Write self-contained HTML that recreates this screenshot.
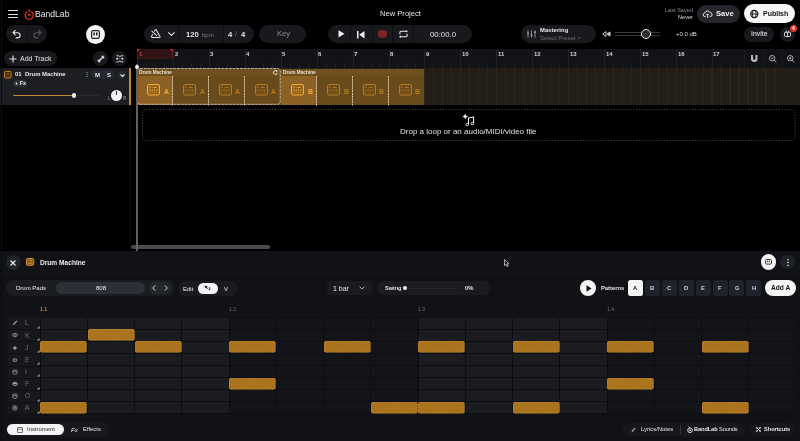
<!DOCTYPE html><html><head><meta charset="utf-8"><style>
*{margin:0;padding:0;box-sizing:border-box}
html,body{width:800px;height:441px;overflow:hidden;background:#000;font-family:"Liberation Sans",sans-serif;color:#e8e8ea}
.a{position:absolute}
.p{position:absolute;background:#1c1d21}
.t{position:absolute;white-space:nowrap;line-height:1;will-change:transform}
svg{position:absolute;overflow:visible}
</style></head><body>
<div class="a" style="left:8px;top:10px;width:10px;height:1.4px;background:#e6e6e6;border-radius:0.7px;"></div>
<div class="a" style="left:8px;top:13.5px;width:10px;height:1.4px;background:#e6e6e6;border-radius:0.7px;"></div>
<div class="a" style="left:8px;top:17px;width:10px;height:1.4px;background:#e6e6e6;border-radius:0.7px;"></div>
<svg style="left:23.5px;top:8.5px" width="10" height="10" viewBox="0 0 10 10"><path d="M3.3 2.6 A4.1 4.1 0 1 0 7.1 2.6" fill="none" stroke="#dc2a22" stroke-width="1.3"/><path d="M5.2 0.4 V2.8" stroke="#dc2a22" stroke-width="1.8"/><circle cx="5.2" cy="5.7" r="1.3" fill="#dc2a22"/></svg>
<div class="t" style="left:34.5px;top:10.3px;font-size:8.6px;color:#e6e6e6;font-weight:normal;">BandLab</div>
<div class="t" style="left:379.6px;top:10.3px;font-size:7.6px;color:#e6e6e6;font-weight:normal;">New Project</div>
<div class="a" style="left:6px;top:25px;width:41px;height:18px;background:#18191d;border-radius:9px;"></div>
<div class="a" style="left:26.5px;top:25px;width:1px;height:18px;background:#0e0e10;border-radius:0px;"></div>
<svg style="left:12px;top:29px" width="10" height="10" viewBox="0 0 10 10"><path d="M3.2 1.5 L1 3.7 L3.2 5.9 M1.2 3.7 H5.5 A2.6 2.6 0 0 1 5.5 8.9 H4.2" fill="none" stroke="#e8e8e8" stroke-width="1.1" stroke-linecap="round" stroke-linejoin="round"/></svg>
<svg style="left:32px;top:29px" width="10" height="10" viewBox="0 0 10 10"><path d="M6.8 1.5 L9 3.7 L6.8 5.9 M8.8 3.7 H4.5 A2.6 2.6 0 0 0 4.5 8.9 H5.8" fill="none" stroke="#555" stroke-width="1.1" stroke-linecap="round" stroke-linejoin="round"/></svg>
<div class="a" style="left:86px;top:24.5px;width:19px;height:19px;background:#f4f4f4;border-radius:9.5px;"></div>
<svg style="left:91.2px;top:29.6px" width="9" height="9" viewBox="0 0 9 9"><rect x="0.6" y="0.6" width="7.8" height="7.8" rx="1.6" fill="none" stroke="#222" stroke-width="1.2"/><rect x="2.4" y="2.4" width="1.5" height="3" fill="#222"/><rect x="5" y="2.4" width="1.5" height="3" fill="#222"/></svg>
<div class="a" style="left:144px;top:25px;width:110px;height:18px;background:#18191d;border-radius:9px;"></div>
<div class="a" style="left:177.5px;top:25px;width:1px;height:18px;background:#0e0e10;border-radius:0px;"></div>
<div class="a" style="left:222.5px;top:25px;width:1px;height:18px;background:#0e0e10;border-radius:0px;"></div>
<svg style="left:150.8px;top:29.3px" width="9.5" height="9" viewBox="0 0 9.5 9"><path d="M3.2 2.6 L4.2 0.9 Q4.75 0.1 5.3 0.9 L9 7.4 Q9.3 8.5 8.2 8.5 H1.3 Q0.2 8.5 0.5 7.4 L1.7 5.2" fill="none" stroke="#e6e6e6" stroke-width="1.05" stroke-linejoin="round"/><path d="M0.8 2.2 L5.8 6.6" stroke="#e6e6e6" stroke-width="1.05" stroke-linecap="round"/></svg>
<svg style="left:168px;top:32.4px" width="7" height="4" viewBox="0 0 7 4"><path d="M0.6 0.6 L3.4 3.3 L6.2 0.6" fill="none" stroke="#e6e6e6" stroke-width="1.1" stroke-linecap="round" stroke-linejoin="round"/></svg>
<div class="t" style="left:186.2px;top:30.6px;font-size:7.6px;color:#e6e6e6;font-weight:bold;">120</div>
<div class="t" style="left:202px;top:31.8px;font-size:6px;color:#808084;font-weight:normal;">bpm</div>
<div class="t" style="left:228.2px;top:30.6px;font-size:7.6px;color:#e6e6e6;font-weight:bold;">4</div>
<div class="t" style="left:235px;top:30.4px;font-size:8px;color:#777;font-weight:normal;">/</div>
<div class="t" style="left:241.4px;top:30.6px;font-size:7.6px;color:#e6e6e6;font-weight:bold;">4</div>
<div class="a" style="left:259px;top:25px;width:47px;height:18px;background:#18191d;border-radius:9px;"></div>
<div class="t" style="left:276.5px;top:30.4px;font-size:7.6px;color:#8a8a8e;font-weight:normal;">Key</div>
<div class="a" style="left:328px;top:25px;width:144px;height:18px;background:#18191d;border-radius:9px;"></div>
<div class="a" style="left:350px;top:25px;width:1px;height:18px;background:#0e0e10;border-radius:0px;"></div>
<div class="a" style="left:372px;top:25px;width:1px;height:18px;background:#0e0e10;border-radius:0px;"></div>
<div class="a" style="left:392.2px;top:25px;width:1px;height:18px;background:#0e0e10;border-radius:0px;"></div>
<div class="a" style="left:413.2px;top:25px;width:1px;height:18px;background:#0e0e10;border-radius:0px;"></div>
<svg style="left:337.6px;top:30.2px" width="7" height="8" viewBox="0 0 7 8"><path d="M0.5 0.3 L6.5 3.8 L0.5 7.5 Z" fill="#eee"/></svg>
<svg style="left:357px;top:30.7px" width="8" height="7.5" viewBox="0 0 8 7.5"><rect x="0" y="0" width="1.5" height="7.5" fill="#eee"/><path d="M7.5 0 L2.2 3.75 L7.5 7.5 Z" fill="#eee"/></svg>
<div class="a" style="left:378.2px;top:29.6px;width:8.8px;height:8.8px;background:#7e2421;border-radius:4.4px;"></div>
<svg style="left:399.3px;top:30.3px" width="9" height="8" viewBox="0 0 9 8"><path d="M0.9 4.2 V2.6 Q0.9 1.3 2.2 1.3 H7.6 M8.1 3.8 V5.4 Q8.1 6.7 6.8 6.7 H1.4" fill="none" stroke="#eee" stroke-width="1.05"/><circle cx="7.7" cy="1.3" r="0.9" fill="#eee"/><circle cx="1.3" cy="6.7" r="0.9" fill="#eee"/></svg>
<div class="t" style="left:430px;top:30.6px;font-size:7.8px;color:#e6e6e6;font-weight:normal;">00:00.0</div>
<div class="a" style="left:520.5px;top:25px;width:75.5px;height:18px;background:#18191d;border-radius:9px;"></div>
<svg style="left:526.6px;top:30px" width="9" height="8" viewBox="0 0 9 8"><g stroke="#9a9a9e" stroke-width="0.9"><path d="M1 0.3V2.2M1 4V7.7M4.5 0.3V4.2M4.5 6V7.7M8 0.3V1.2M8 3V7.7"/></g><g fill="#b0b0b4"><rect x="0" y="2.4" width="2" height="1.4"/><rect x="3.5" y="4.4" width="2" height="1.4"/><rect x="7" y="1.4" width="2" height="1.4"/></g></svg>
<div class="t" style="left:539.5px;top:27.6px;font-size:5.8px;color:#eeeeee;font-weight:bold;letter-spacing:0.1px">Mastering</div>
<div class="t" style="left:539.5px;top:35px;font-size:6px;color:#6e6e72;font-weight:normal;">Select Preset &gt;</div>
<svg style="left:601.5px;top:31px" width="9" height="6" viewBox="0 0 9 6"><path d="M0.6 3 L4 0.6 V5.4 Z" fill="none" stroke="#ddd" stroke-width="0.9" stroke-linejoin="round"/><path d="M5.2 2 L8.5 0.4 V5.6 L5.2 4 Z" fill="#ccc"/></svg>
<div class="a" style="left:615px;top:31.8px;width:45px;height:1.2px;background:#38383c;border-radius:0px;"></div>
<div class="a" style="left:615px;top:35.3px;width:45px;height:1.2px;background:#38383c;border-radius:0px;"></div>
<div class="a" style="left:640.5px;top:29px;width:10px;height:10px;border-radius:50%;background:#2e2e31;border:1.1px solid #e8e8e8"></div>
<div class="t" style="left:675.5px;top:31.2px;font-size:6px;color:#dcdcdc;font-weight:normal;">+0.0 dB</div>
<div class="t" style="left:664.5px;top:7.8px;font-size:5.6px;color:#8a8a8e;font-weight:normal;">Last Saved</div>
<div class="t" style="left:677.5px;top:14.7px;font-size:5.6px;color:#dcdcde;font-weight:normal;">Never</div>
<div class="a" style="left:697px;top:4.5px;width:43px;height:18.5px;background:#24262b;border-radius:9.25px;"></div>
<svg style="left:703.3px;top:9.6px" width="9" height="8" viewBox="0 0 9 8"><path d="M2.6 6.6 H2.1 A1.8 1.8 0 0 1 1.9 3 A2.7 2.7 0 0 1 7 2.6 A1.9 1.9 0 0 1 7.2 6.6 H6.6" fill="none" stroke="#eee" stroke-width="0.95"/><path d="M4.6 7.8 V4 M3.3 5.2 L4.6 3.9 L5.9 5.2" fill="none" stroke="#eee" stroke-width="0.95"/></svg>
<div class="t" style="left:715.8px;top:9.6px;font-size:7.6px;color:#f0f0f0;font-weight:bold;">Save</div>
<div class="a" style="left:744px;top:4px;width:51px;height:19px;background:#f6f6f6;border-radius:9.5px;"></div>
<svg style="left:749.6px;top:9.6px" width="9" height="8" viewBox="0 0 9 8"><circle cx="4.3" cy="4" r="3.6" fill="none" stroke="#111" stroke-width="1.1"/><path d="M0.7 4 H7.9 M3 0.8 Q1.9 4 3 7.2 M5.6 0.8 Q6.7 4 5.6 7.2" stroke="#111" stroke-width="0.9" fill="none"/></svg>
<div class="t" style="left:762.5px;top:10px;font-size:7px;color:#111;font-weight:bold;">Publish</div>
<div class="a" style="left:744px;top:27px;width:30px;height:14.5px;background:#18191d;border-radius:7.25px;"></div>
<div class="t" style="left:750.6px;top:31px;font-size:6.9px;color:#f0f0f0;font-weight:normal;">Invite</div>
<div class="a" style="left:780px;top:27px;width:14.5px;height:14.5px;background:#18191d;border-radius:7.25px;"></div>
<svg style="left:783.8px;top:30.3px" width="7" height="7" viewBox="0 0 7 7"><rect x="0.5" y="2.3" width="6" height="4.2" rx="0.8" fill="none" stroke="#ddd" stroke-width="0.95"/><path d="M2.3 2.3 V0.6 M4.7 2.3 V0.6 M3.5 2.3 V6.5" stroke="#ddd" stroke-width="0.95"/></svg>
<div class="a" style="left:789.7px;top:24.6px;width:7px;height:7px;background:#e3352b;border-radius:3.5px;"></div>
<div class="t" style="left:791.6px;top:25.7px;font-size:5px;color:#fff;font-weight:bold;">4</div>
<div class="a" style="left:4px;top:51px;width:53px;height:15px;background:#18191d;border-radius:7.5px;"></div>
<svg style="left:8.5px;top:54.5px" width="8" height="8" viewBox="0 0 8 8"><path d="M4 0.5 V7.5 M0.5 4 H7.5" stroke="#e6e6e6" stroke-width="1.1"/></svg>
<div class="t" style="left:19.5px;top:55px;font-size:7px;color:#e6e6e6;font-weight:normal;">Add Track</div>
<div class="a" style="left:93px;top:51px;width:15px;height:15px;background:#18191d;border-radius:7.5px;"></div>
<svg style="left:96.5px;top:54.5px" width="8" height="8" viewBox="0 0 8 8"><path d="M2.2 5.8 L5.8 2.2" stroke="#d8d8d8" stroke-width="1.5"/><circle cx="1.6" cy="5.6" r="1.05" fill="#d8d8d8"/><circle cx="2.4" cy="6.4" r="1.05" fill="#d8d8d8"/><circle cx="5.6" cy="1.6" r="1.05" fill="#d8d8d8"/><circle cx="6.4" cy="2.4" r="1.05" fill="#d8d8d8"/></svg>
<div class="a" style="left:112px;top:51px;width:15px;height:15px;background:#18191d;border-radius:7.5px;"></div>
<svg style="left:115.5px;top:54.5px" width="8" height="8" viewBox="0 0 8 8"><path d="M0.4 0.7 L2.6 0.9 L3.9 1.5 L5.2 0.9 L7.4 0.7 M0.4 6.9 L2.6 6.7 L3.9 6.1 L5.2 6.7 L7.4 6.9" fill="none" stroke="#d0d0d0" stroke-width="1"/><circle cx="1.3" cy="3.8" r="1" fill="#f0f0f0"/><circle cx="6.4" cy="3.8" r="1" fill="#f0f0f0"/><circle cx="3.85" cy="3.8" r="0.5" fill="#bbb"/></svg>
<div class="a" style="left:0px;top:68px;width:129px;height:37px;background:#1d1e22;border-radius:0px;"></div>
<div class="a" style="left:129px;top:68px;width:2px;height:37px;background:#c38b2f;border-radius:0px;"></div>
<svg style="left:3.6px;top:70.6px" width="7.5" height="7.5" viewBox="0 0 7.5 7.5"><rect x="0.45" y="0.45" width="6.6" height="6.6" rx="0.9" fill="#33240f" stroke="#dc8f2c" stroke-width="0.9"/><path d="M1.8 2.4 H5.7 M1.8 3.8 H5.7 M1.8 5.2 H5.7" stroke="#dc8f2c" stroke-width="0.6" stroke-dasharray="0.7 0.5"/></svg>
<div class="t" style="left:14.8px;top:72.2px;font-size:5.9px;color:#ececec;font-weight:bold;">01</div>
<div class="t" style="left:24.8px;top:72.2px;font-size:5.9px;color:#ececec;font-weight:bold;">Drum Machine</div>
<svg style="left:85.5px;top:72.2px" width="2" height="5" viewBox="0 0 2 5"><circle cx="1" cy="0.5" r="0.5" fill="#ccc"/><circle cx="1" cy="2.5" r="0.5" fill="#ccc"/><circle cx="1" cy="4.5" r="0.5" fill="#ccc"/></svg>
<div class="a" style="left:91.3px;top:69.6px;width:23.7px;height:9.6px;background:#252830;border-radius:4.8px;"></div>
<div class="t" style="left:95.4px;top:71.6px;font-size:6px;color:#e6e6e6;font-weight:bold;">M</div>
<div class="t" style="left:107.4px;top:71.6px;font-size:6px;color:#e6e6e6;font-weight:bold;">S</div>
<div class="a" style="left:117.8px;top:70.8px;width:8.6px;height:8.2px;background:#262930;border-radius:4.1px;"></div>
<svg style="left:119.6px;top:73.6px" width="5" height="3" viewBox="0 0 5 3"><path d="M0.5 0.5 L2.5 2.4 L4.5 0.5" fill="none" stroke="#e8e8e8" stroke-width="1.1"/></svg>
<div class="a" style="left:13.2px;top:80.3px;width:13.4px;height:6.8px;background:#2d3037;border-radius:3.4px;"></div>
<div class="t" style="left:15px;top:81.2px;font-size:5.4px;color:#ececec;font-weight:bold;">+ Fx</div>
<div class="a" style="left:13px;top:95px;width:60.5px;height:1.4px;background:#c38b2f;border-radius:0.7px;"></div>
<div class="a" style="left:73.5px;top:95.3px;width:25.5px;height:0.7px;background:#2c2d32;border-radius:0px;"></div>
<div class="a" style="left:71.5px;top:93.3px;width:4.5px;height:4.5px;background:#f2f2f2;border-radius:2.25px;"></div>
<div class="a" style="left:110.8px;top:90.3px;width:11px;height:11px;background:#f4f4f4;border-radius:5.5px;"></div>
<div class="a" style="left:115.7px;top:91.2px;width:1.1px;height:3.6px;background:#333;border-radius:0px;"></div>
<div class="t" style="left:107.6px;top:97.2px;font-size:4.5px;color:#999;font-weight:normal;">L</div>
<div class="t" style="left:122.6px;top:97.2px;font-size:4.5px;color:#999;font-weight:normal;">R</div>
<div class="a" style="left:137px;top:49px;width:607px;height:18.5px;background:#121316;border-radius:0px;"></div>
<div class="a" style="left:137.0px;top:49px;width:0.8px;height:18.5px;background:#222225;border-radius:0px;"></div>
<div class="t" style="left:138.6px;top:51.3px;font-size:6px;color:#d2d2d4;font-weight:bold;">1</div>
<div class="a" style="left:145.98px;top:63px;width:0.7px;height:4.5px;background:#222225;border-radius:0px;"></div>
<div class="a" style="left:154.97px;top:63px;width:0.7px;height:4.5px;background:#222225;border-radius:0px;"></div>
<div class="a" style="left:163.95px;top:63px;width:0.7px;height:4.5px;background:#222225;border-radius:0px;"></div>
<div class="a" style="left:172.93px;top:49px;width:0.8px;height:18.5px;background:#222225;border-radius:0px;"></div>
<div class="t" style="left:174.53px;top:51.3px;font-size:6px;color:#d2d2d4;font-weight:bold;">2</div>
<div class="a" style="left:181.91px;top:63px;width:0.7px;height:4.5px;background:#222225;border-radius:0px;"></div>
<div class="a" style="left:190.9px;top:63px;width:0.7px;height:4.5px;background:#222225;border-radius:0px;"></div>
<div class="a" style="left:199.88px;top:63px;width:0.7px;height:4.5px;background:#222225;border-radius:0px;"></div>
<div class="a" style="left:208.86px;top:49px;width:0.8px;height:18.5px;background:#222225;border-radius:0px;"></div>
<div class="t" style="left:210.46px;top:51.3px;font-size:6px;color:#d2d2d4;font-weight:bold;">3</div>
<div class="a" style="left:217.84px;top:63px;width:0.7px;height:4.5px;background:#222225;border-radius:0px;"></div>
<div class="a" style="left:226.83px;top:63px;width:0.7px;height:4.5px;background:#222225;border-radius:0px;"></div>
<div class="a" style="left:235.81px;top:63px;width:0.7px;height:4.5px;background:#222225;border-radius:0px;"></div>
<div class="a" style="left:244.79px;top:49px;width:0.8px;height:18.5px;background:#222225;border-radius:0px;"></div>
<div class="t" style="left:246.39px;top:51.3px;font-size:6px;color:#d2d2d4;font-weight:bold;">4</div>
<div class="a" style="left:253.77px;top:63px;width:0.7px;height:4.5px;background:#222225;border-radius:0px;"></div>
<div class="a" style="left:262.75px;top:63px;width:0.7px;height:4.5px;background:#222225;border-radius:0px;"></div>
<div class="a" style="left:271.74px;top:63px;width:0.7px;height:4.5px;background:#222225;border-radius:0px;"></div>
<div class="a" style="left:280.72px;top:49px;width:0.8px;height:18.5px;background:#222225;border-radius:0px;"></div>
<div class="t" style="left:282.32000000000005px;top:51.3px;font-size:6px;color:#d2d2d4;font-weight:bold;">5</div>
<div class="a" style="left:289.7px;top:63px;width:0.7px;height:4.5px;background:#222225;border-radius:0px;"></div>
<div class="a" style="left:298.69px;top:63px;width:0.7px;height:4.5px;background:#222225;border-radius:0px;"></div>
<div class="a" style="left:307.67px;top:63px;width:0.7px;height:4.5px;background:#222225;border-radius:0px;"></div>
<div class="a" style="left:316.65px;top:49px;width:0.8px;height:18.5px;background:#222225;border-radius:0px;"></div>
<div class="t" style="left:318.25px;top:51.3px;font-size:6px;color:#d2d2d4;font-weight:bold;">6</div>
<div class="a" style="left:325.63px;top:63px;width:0.7px;height:4.5px;background:#222225;border-radius:0px;"></div>
<div class="a" style="left:334.61px;top:63px;width:0.7px;height:4.5px;background:#222225;border-radius:0px;"></div>
<div class="a" style="left:343.6px;top:63px;width:0.7px;height:4.5px;background:#222225;border-radius:0px;"></div>
<div class="a" style="left:352.58px;top:49px;width:0.8px;height:18.5px;background:#222225;border-radius:0px;"></div>
<div class="t" style="left:354.18px;top:51.3px;font-size:6px;color:#d2d2d4;font-weight:bold;">7</div>
<div class="a" style="left:361.56px;top:63px;width:0.7px;height:4.5px;background:#222225;border-radius:0px;"></div>
<div class="a" style="left:370.54px;top:63px;width:0.7px;height:4.5px;background:#222225;border-radius:0px;"></div>
<div class="a" style="left:379.53px;top:63px;width:0.7px;height:4.5px;background:#222225;border-radius:0px;"></div>
<div class="a" style="left:388.51px;top:49px;width:0.8px;height:18.5px;background:#222225;border-radius:0px;"></div>
<div class="t" style="left:390.11px;top:51.3px;font-size:6px;color:#d2d2d4;font-weight:bold;">8</div>
<div class="a" style="left:397.49px;top:63px;width:0.7px;height:4.5px;background:#222225;border-radius:0px;"></div>
<div class="a" style="left:406.47px;top:63px;width:0.7px;height:4.5px;background:#222225;border-radius:0px;"></div>
<div class="a" style="left:415.46px;top:63px;width:0.7px;height:4.5px;background:#222225;border-radius:0px;"></div>
<div class="a" style="left:424.44px;top:49px;width:0.8px;height:18.5px;background:#222225;border-radius:0px;"></div>
<div class="t" style="left:426.04px;top:51.3px;font-size:6px;color:#d2d2d4;font-weight:bold;">9</div>
<div class="a" style="left:433.42px;top:63px;width:0.7px;height:4.5px;background:#222225;border-radius:0px;"></div>
<div class="a" style="left:442.4px;top:63px;width:0.7px;height:4.5px;background:#222225;border-radius:0px;"></div>
<div class="a" style="left:451.39px;top:63px;width:0.7px;height:4.5px;background:#222225;border-radius:0px;"></div>
<div class="a" style="left:460.37px;top:49px;width:0.8px;height:18.5px;background:#222225;border-radius:0px;"></div>
<div class="t" style="left:461.97px;top:51.3px;font-size:6px;color:#d2d2d4;font-weight:bold;">10</div>
<div class="a" style="left:469.35px;top:63px;width:0.7px;height:4.5px;background:#222225;border-radius:0px;"></div>
<div class="a" style="left:478.33px;top:63px;width:0.7px;height:4.5px;background:#222225;border-radius:0px;"></div>
<div class="a" style="left:487.32px;top:63px;width:0.7px;height:4.5px;background:#222225;border-radius:0px;"></div>
<div class="a" style="left:496.3px;top:49px;width:0.8px;height:18.5px;background:#222225;border-radius:0px;"></div>
<div class="t" style="left:497.90000000000003px;top:51.3px;font-size:6px;color:#d2d2d4;font-weight:bold;">11</div>
<div class="a" style="left:505.28px;top:63px;width:0.7px;height:4.5px;background:#222225;border-radius:0px;"></div>
<div class="a" style="left:514.26px;top:63px;width:0.7px;height:4.5px;background:#222225;border-radius:0px;"></div>
<div class="a" style="left:523.25px;top:63px;width:0.7px;height:4.5px;background:#222225;border-radius:0px;"></div>
<div class="a" style="left:532.23px;top:49px;width:0.8px;height:18.5px;background:#222225;border-radius:0px;"></div>
<div class="t" style="left:533.83px;top:51.3px;font-size:6px;color:#d2d2d4;font-weight:bold;">12</div>
<div class="a" style="left:541.21px;top:63px;width:0.7px;height:4.5px;background:#222225;border-radius:0px;"></div>
<div class="a" style="left:550.2px;top:63px;width:0.7px;height:4.5px;background:#222225;border-radius:0px;"></div>
<div class="a" style="left:559.18px;top:63px;width:0.7px;height:4.5px;background:#222225;border-radius:0px;"></div>
<div class="a" style="left:568.16px;top:49px;width:0.8px;height:18.5px;background:#222225;border-radius:0px;"></div>
<div class="t" style="left:569.76px;top:51.3px;font-size:6px;color:#d2d2d4;font-weight:bold;">13</div>
<div class="a" style="left:577.14px;top:63px;width:0.7px;height:4.5px;background:#222225;border-radius:0px;"></div>
<div class="a" style="left:586.12px;top:63px;width:0.7px;height:4.5px;background:#222225;border-radius:0px;"></div>
<div class="a" style="left:595.11px;top:63px;width:0.7px;height:4.5px;background:#222225;border-radius:0px;"></div>
<div class="a" style="left:604.09px;top:49px;width:0.8px;height:18.5px;background:#222225;border-radius:0px;"></div>
<div class="t" style="left:605.69px;top:51.3px;font-size:6px;color:#d2d2d4;font-weight:bold;">14</div>
<div class="a" style="left:613.07px;top:63px;width:0.7px;height:4.5px;background:#222225;border-radius:0px;"></div>
<div class="a" style="left:622.06px;top:63px;width:0.7px;height:4.5px;background:#222225;border-radius:0px;"></div>
<div class="a" style="left:631.04px;top:63px;width:0.7px;height:4.5px;background:#222225;border-radius:0px;"></div>
<div class="a" style="left:640.02px;top:49px;width:0.8px;height:18.5px;background:#222225;border-radius:0px;"></div>
<div class="t" style="left:641.62px;top:51.3px;font-size:6px;color:#d2d2d4;font-weight:bold;">15</div>
<div class="a" style="left:649.0px;top:63px;width:0.7px;height:4.5px;background:#222225;border-radius:0px;"></div>
<div class="a" style="left:657.99px;top:63px;width:0.7px;height:4.5px;background:#222225;border-radius:0px;"></div>
<div class="a" style="left:666.97px;top:63px;width:0.7px;height:4.5px;background:#222225;border-radius:0px;"></div>
<div class="a" style="left:675.95px;top:49px;width:0.8px;height:18.5px;background:#222225;border-radius:0px;"></div>
<div class="t" style="left:677.5500000000001px;top:51.3px;font-size:6px;color:#d2d2d4;font-weight:bold;">16</div>
<div class="a" style="left:684.93px;top:63px;width:0.7px;height:4.5px;background:#222225;border-radius:0px;"></div>
<div class="a" style="left:693.92px;top:63px;width:0.7px;height:4.5px;background:#222225;border-radius:0px;"></div>
<div class="a" style="left:702.9px;top:63px;width:0.7px;height:4.5px;background:#222225;border-radius:0px;"></div>
<div class="a" style="left:711.88px;top:49px;width:0.8px;height:18.5px;background:#222225;border-radius:0px;"></div>
<div class="t" style="left:713.48px;top:51.3px;font-size:6px;color:#d2d2d4;font-weight:bold;">17</div>
<div class="a" style="left:720.86px;top:63px;width:0.7px;height:4.5px;background:#222225;border-radius:0px;"></div>
<div class="a" style="left:729.85px;top:63px;width:0.7px;height:4.5px;background:#222225;border-radius:0px;"></div>
<div class="a" style="left:738.83px;top:63px;width:0.7px;height:4.5px;background:#222225;border-radius:0px;"></div>
<div class="a" style="left:137px;top:49px;width:36px;height:9.5px;background:#301413;border-radius:0px;border-left:0.8px dotted #6a2622;border-right:0.8px dotted #6a2622;border-bottom:0.8px dotted #4a1c1a"></div>
<svg style="left:137px;top:49px" width="4" height="4" viewBox="0 0 4 4"><path d="M0 0 H3.2 L0 3.2 Z" fill="#a82d28"/></svg>
<svg style="left:169px;top:49px" width="4" height="4" viewBox="0 0 4 4"><path d="M4 0 H0.8 L4 3.2 Z" fill="#a82d28"/></svg>
<div class="t" style="left:138.6px;top:51.3px;font-size:6px;color:#c0443c;font-weight:bold;">1</div>
<div class="a" style="left:744px;top:49px;width:56px;height:18.5px;background:#121316;border-radius:0px;"></div>
<div class="a" style="left:744px;top:49px;width:0.8px;height:18.5px;background:#1c1c1f;border-radius:0px;"></div>
<div class="a" style="left:763px;top:49px;width:0.8px;height:18.5px;background:#1c1c1f;border-radius:0px;"></div>
<div class="a" style="left:781.7px;top:49px;width:0.8px;height:18.5px;background:#1c1c1f;border-radius:0px;"></div>
<svg style="left:750.5px;top:55px" width="6.5" height="7" viewBox="0 0 6.5 7"><path d="M0 0 H2 V3.5 A1.25 1.25 0 0 0 4.5 3.5 V0 H6.5 V3.7 A3.25 3.25 0 0 1 0 3.7 Z" fill="#bbb"/></svg>
<svg style="left:768.5px;top:55px" width="8" height="8" viewBox="0 0 8 8"><circle cx="3.2" cy="3.2" r="2.7" fill="none" stroke="#bbb" stroke-width="0.9"/><path d="M2 3.2 H4.4 M5.2 5.2 L7.3 7.3" stroke="#bbb" stroke-width="0.9"/></svg>
<svg style="left:787px;top:55px" width="8" height="8" viewBox="0 0 8 8"><circle cx="3.2" cy="3.2" r="2.7" fill="none" stroke="#bbb" stroke-width="0.9"/><path d="M2 3.2 H4.4 M3.2 2 V4.4 M5.2 5.2 L7.3 7.3" stroke="#bbb" stroke-width="0.9"/></svg>
<div class="a" style="left:137px;top:68px;width:663px;height:37px;background:#231e17;border-radius:0px;"></div>
<div class="a" style="left:136.6px;top:68px;width:1.4px;height:37px;background:#2c261d;border-radius:0px;"></div>
<div class="a" style="left:145.57999999999998px;top:68px;width:1.4px;height:37px;background:#29241c;border-radius:0px;"></div>
<div class="a" style="left:154.57px;top:68px;width:1.4px;height:37px;background:#29241c;border-radius:0px;"></div>
<div class="a" style="left:163.54999999999998px;top:68px;width:1.4px;height:37px;background:#29241c;border-radius:0px;"></div>
<div class="a" style="left:172.53px;top:68px;width:1.4px;height:37px;background:#2c261d;border-radius:0px;"></div>
<div class="a" style="left:181.51px;top:68px;width:1.4px;height:37px;background:#29241c;border-radius:0px;"></div>
<div class="a" style="left:190.48999999999998px;top:68px;width:1.4px;height:37px;background:#29241c;border-radius:0px;"></div>
<div class="a" style="left:199.48px;top:68px;width:1.4px;height:37px;background:#29241c;border-radius:0px;"></div>
<div class="a" style="left:208.46px;top:68px;width:1.4px;height:37px;background:#2c261d;border-radius:0px;"></div>
<div class="a" style="left:217.44px;top:68px;width:1.4px;height:37px;background:#29241c;border-radius:0px;"></div>
<div class="a" style="left:226.42px;top:68px;width:1.4px;height:37px;background:#29241c;border-radius:0px;"></div>
<div class="a" style="left:235.41px;top:68px;width:1.4px;height:37px;background:#29241c;border-radius:0px;"></div>
<div class="a" style="left:244.39px;top:68px;width:1.4px;height:37px;background:#2c261d;border-radius:0px;"></div>
<div class="a" style="left:253.37px;top:68px;width:1.4px;height:37px;background:#29241c;border-radius:0px;"></div>
<div class="a" style="left:262.35px;top:68px;width:1.4px;height:37px;background:#29241c;border-radius:0px;"></div>
<div class="a" style="left:271.34000000000003px;top:68px;width:1.4px;height:37px;background:#29241c;border-radius:0px;"></div>
<div class="a" style="left:280.32000000000005px;top:68px;width:1.4px;height:37px;background:#2c261d;border-radius:0px;"></div>
<div class="a" style="left:289.3px;top:68px;width:1.4px;height:37px;background:#29241c;border-radius:0px;"></div>
<div class="a" style="left:298.29px;top:68px;width:1.4px;height:37px;background:#29241c;border-radius:0px;"></div>
<div class="a" style="left:307.27000000000004px;top:68px;width:1.4px;height:37px;background:#29241c;border-radius:0px;"></div>
<div class="a" style="left:316.25px;top:68px;width:1.4px;height:37px;background:#2c261d;border-radius:0px;"></div>
<div class="a" style="left:325.23px;top:68px;width:1.4px;height:37px;background:#29241c;border-radius:0px;"></div>
<div class="a" style="left:334.22px;top:68px;width:1.4px;height:37px;background:#29241c;border-radius:0px;"></div>
<div class="a" style="left:343.20000000000005px;top:68px;width:1.4px;height:37px;background:#29241c;border-radius:0px;"></div>
<div class="a" style="left:352.18px;top:68px;width:1.4px;height:37px;background:#2c261d;border-radius:0px;"></div>
<div class="a" style="left:361.16px;top:68px;width:1.4px;height:37px;background:#29241c;border-radius:0px;"></div>
<div class="a" style="left:370.14000000000004px;top:68px;width:1.4px;height:37px;background:#29241c;border-radius:0px;"></div>
<div class="a" style="left:379.13px;top:68px;width:1.4px;height:37px;background:#29241c;border-radius:0px;"></div>
<div class="a" style="left:388.11px;top:68px;width:1.4px;height:37px;background:#2c261d;border-radius:0px;"></div>
<div class="a" style="left:397.09000000000003px;top:68px;width:1.4px;height:37px;background:#29241c;border-radius:0px;"></div>
<div class="a" style="left:406.08000000000004px;top:68px;width:1.4px;height:37px;background:#29241c;border-radius:0px;"></div>
<div class="a" style="left:415.06px;top:68px;width:1.4px;height:37px;background:#29241c;border-radius:0px;"></div>
<div class="a" style="left:424.04px;top:68px;width:1.4px;height:37px;background:#2c261d;border-radius:0px;"></div>
<div class="a" style="left:433.02000000000004px;top:68px;width:1.4px;height:37px;background:#29241c;border-radius:0px;"></div>
<div class="a" style="left:442.0px;top:68px;width:1.4px;height:37px;background:#29241c;border-radius:0px;"></div>
<div class="a" style="left:450.99px;top:68px;width:1.4px;height:37px;background:#29241c;border-radius:0px;"></div>
<div class="a" style="left:459.97px;top:68px;width:1.4px;height:37px;background:#2c261d;border-radius:0px;"></div>
<div class="a" style="left:468.95000000000005px;top:68px;width:1.4px;height:37px;background:#29241c;border-radius:0px;"></div>
<div class="a" style="left:477.93px;top:68px;width:1.4px;height:37px;background:#29241c;border-radius:0px;"></div>
<div class="a" style="left:486.92px;top:68px;width:1.4px;height:37px;background:#29241c;border-radius:0px;"></div>
<div class="a" style="left:495.90000000000003px;top:68px;width:1.4px;height:37px;background:#2c261d;border-radius:0px;"></div>
<div class="a" style="left:504.88px;top:68px;width:1.4px;height:37px;background:#29241c;border-radius:0px;"></div>
<div class="a" style="left:513.86px;top:68px;width:1.4px;height:37px;background:#29241c;border-radius:0px;"></div>
<div class="a" style="left:522.85px;top:68px;width:1.4px;height:37px;background:#29241c;border-radius:0px;"></div>
<div class="a" style="left:531.83px;top:68px;width:1.4px;height:37px;background:#2c261d;border-radius:0px;"></div>
<div class="a" style="left:540.8100000000001px;top:68px;width:1.4px;height:37px;background:#29241c;border-radius:0px;"></div>
<div class="a" style="left:549.7900000000001px;top:68px;width:1.4px;height:37px;background:#29241c;border-radius:0px;"></div>
<div class="a" style="left:558.78px;top:68px;width:1.4px;height:37px;background:#29241c;border-radius:0px;"></div>
<div class="a" style="left:567.76px;top:68px;width:1.4px;height:37px;background:#2c261d;border-radius:0px;"></div>
<div class="a" style="left:576.74px;top:68px;width:1.4px;height:37px;background:#29241c;border-radius:0px;"></div>
<div class="a" style="left:585.72px;top:68px;width:1.4px;height:37px;background:#29241c;border-radius:0px;"></div>
<div class="a" style="left:594.71px;top:68px;width:1.4px;height:37px;background:#29241c;border-radius:0px;"></div>
<div class="a" style="left:603.69px;top:68px;width:1.4px;height:37px;background:#2c261d;border-radius:0px;"></div>
<div class="a" style="left:612.6700000000001px;top:68px;width:1.4px;height:37px;background:#29241c;border-radius:0px;"></div>
<div class="a" style="left:621.66px;top:68px;width:1.4px;height:37px;background:#29241c;border-radius:0px;"></div>
<div class="a" style="left:630.64px;top:68px;width:1.4px;height:37px;background:#29241c;border-radius:0px;"></div>
<div class="a" style="left:639.62px;top:68px;width:1.4px;height:37px;background:#2c261d;border-radius:0px;"></div>
<div class="a" style="left:648.6px;top:68px;width:1.4px;height:37px;background:#29241c;border-radius:0px;"></div>
<div class="a" style="left:657.59px;top:68px;width:1.4px;height:37px;background:#29241c;border-radius:0px;"></div>
<div class="a" style="left:666.57px;top:68px;width:1.4px;height:37px;background:#29241c;border-radius:0px;"></div>
<div class="a" style="left:675.5500000000001px;top:68px;width:1.4px;height:37px;background:#2c261d;border-radius:0px;"></div>
<div class="a" style="left:684.53px;top:68px;width:1.4px;height:37px;background:#29241c;border-radius:0px;"></div>
<div class="a" style="left:693.51px;top:68px;width:1.4px;height:37px;background:#29241c;border-radius:0px;"></div>
<div class="a" style="left:702.5px;top:68px;width:1.4px;height:37px;background:#29241c;border-radius:0px;"></div>
<div class="a" style="left:711.48px;top:68px;width:1.4px;height:37px;background:#2c261d;border-radius:0px;"></div>
<div class="a" style="left:720.46px;top:68px;width:1.4px;height:37px;background:#29241c;border-radius:0px;"></div>
<div class="a" style="left:729.45px;top:68px;width:1.4px;height:37px;background:#29241c;border-radius:0px;"></div>
<div class="a" style="left:738.4300000000001px;top:68px;width:1.4px;height:37px;background:#29241c;border-radius:0px;"></div>
<div class="a" style="left:747.41px;top:68px;width:1.4px;height:37px;background:#2c261d;border-radius:0px;"></div>
<div class="a" style="left:756.39px;top:68px;width:1.4px;height:37px;background:#29241c;border-radius:0px;"></div>
<div class="a" style="left:765.37px;top:68px;width:1.4px;height:37px;background:#29241c;border-radius:0px;"></div>
<div class="a" style="left:774.36px;top:68px;width:1.4px;height:37px;background:#29241c;border-radius:0px;"></div>
<div class="a" style="left:137px;top:68.5px;width:143.72px;height:36.5px;background:#684a1b;border-radius:0px;"></div>
<div class="a" style="left:137px;top:68.5px;width:143.72px;height:7px;background:#6e4f1d;border-radius:0px;"></div>
<div class="a" style="left:137px;top:75.5px;width:35.93px;height:29.5px;background:#8d6123;border-radius:0px;"></div>
<svg style="left:147.3px;top:83.8px" width="13" height="11.5" viewBox="0 0 13 11.5"><rect x="0.55" y="0.55" width="11.9" height="10.4" rx="1.6" fill="none" stroke="#f6a933" stroke-width="1.1"/><circle cx="3.2" cy="3.3" r="0.75" fill="#f6a933"/><path d="M5.8 3.4 H9.8" stroke="#f6a933" stroke-width="0.9"/><path d="M3 5.4 V7.3 M5.25 5.4 V7.3 M7.5 5.4 V7.3 M9.75 5.4 V7.3" stroke="#f6a933" stroke-width="0.8"/><path d="M2.6 8.7 H10.4" stroke="#f6a933" stroke-width="0.8" stroke-dasharray="0.8 1.45"/></svg>
<div class="t" style="left:163.6px;top:89.3px;font-size:6.9px;color:#f6a933;font-weight:bold;">A</div>
<svg style="left:172.33px;top:75.5px" width="1" height="29.5" viewBox="0 0 1 29.5"><path d="M0.5 0 V29.5" stroke="#cfc1a2" stroke-width="1" stroke-dasharray="2.2 0.6"/></svg>
<svg style="left:183.23000000000002px;top:83.8px" width="13" height="11.5" viewBox="0 0 13 11.5"><rect x="0.55" y="0.55" width="11.9" height="10.4" rx="1.6" fill="none" stroke="#b57b22" stroke-width="1.1"/><circle cx="3.2" cy="3.3" r="0.75" fill="#b57b22"/><path d="M5.8 3.4 H9.8" stroke="#b57b22" stroke-width="0.9"/><path d="M3 5.4 V7.3 M5.25 5.4 V7.3 M7.5 5.4 V7.3 M9.75 5.4 V7.3" stroke="#b57b22" stroke-width="0.8"/><path d="M2.6 8.7 H10.4" stroke="#b57b22" stroke-width="0.8" stroke-dasharray="0.8 1.45"/></svg>
<div class="t" style="left:199.53px;top:89.3px;font-size:6.9px;color:#b57b22;font-weight:bold;">A</div>
<svg style="left:208.26000000000002px;top:75.5px" width="1" height="29.5" viewBox="0 0 1 29.5"><path d="M0.5 0 V29.5" stroke="#cfc1a2" stroke-width="1" stroke-dasharray="2.2 0.6"/></svg>
<svg style="left:219.16000000000003px;top:83.8px" width="13" height="11.5" viewBox="0 0 13 11.5"><rect x="0.55" y="0.55" width="11.9" height="10.4" rx="1.6" fill="none" stroke="#b57b22" stroke-width="1.1"/><circle cx="3.2" cy="3.3" r="0.75" fill="#b57b22"/><path d="M5.8 3.4 H9.8" stroke="#b57b22" stroke-width="0.9"/><path d="M3 5.4 V7.3 M5.25 5.4 V7.3 M7.5 5.4 V7.3 M9.75 5.4 V7.3" stroke="#b57b22" stroke-width="0.8"/><path d="M2.6 8.7 H10.4" stroke="#b57b22" stroke-width="0.8" stroke-dasharray="0.8 1.45"/></svg>
<div class="t" style="left:235.46px;top:89.3px;font-size:6.9px;color:#b57b22;font-weight:bold;">A</div>
<svg style="left:244.19px;top:75.5px" width="1" height="29.5" viewBox="0 0 1 29.5"><path d="M0.5 0 V29.5" stroke="#cfc1a2" stroke-width="1" stroke-dasharray="2.2 0.6"/></svg>
<svg style="left:255.09px;top:83.8px" width="13" height="11.5" viewBox="0 0 13 11.5"><rect x="0.55" y="0.55" width="11.9" height="10.4" rx="1.6" fill="none" stroke="#b57b22" stroke-width="1.1"/><circle cx="3.2" cy="3.3" r="0.75" fill="#b57b22"/><path d="M5.8 3.4 H9.8" stroke="#b57b22" stroke-width="0.9"/><path d="M3 5.4 V7.3 M5.25 5.4 V7.3 M7.5 5.4 V7.3 M9.75 5.4 V7.3" stroke="#b57b22" stroke-width="0.8"/><path d="M2.6 8.7 H10.4" stroke="#b57b22" stroke-width="0.8" stroke-dasharray="0.8 1.45"/></svg>
<div class="t" style="left:271.39px;top:89.3px;font-size:6.9px;color:#b57b22;font-weight:bold;">A</div>
<div class="t" style="left:139.2px;top:71.2px;font-size:4.75px;color:#e9dfcc;font-weight:bold;">Drum Machine</div>
<svg style="left:137px;top:68.4px" width="143.72" height="36.8" viewBox="0 0 143.72 36.8"><rect x="0.5" y="0.5" width="142.72" height="35.8" rx="2.5" fill="none" stroke="#c9bfad" stroke-width="0.9" stroke-dasharray="3 0.7"/></svg>
<svg style="left:272.72px;top:70.3px" width="5" height="5" viewBox="0 0 5 5"><path d="M4 1.2 A2 2 0 1 0 4.4 3" fill="none" stroke="#eee" stroke-width="0.9"/><path d="M3.2 0 L4.3 1.3 L2.9 2" fill="none" stroke="#eee" stroke-width="0.8"/></svg>
<div class="a" style="left:281.02px;top:68.5px;width:143.42px;height:36.5px;background:#684a1b;border-radius:0px;"></div>
<div class="a" style="left:281.02px;top:68.5px;width:143.42px;height:7px;background:#6e4f1d;border-radius:0px;"></div>
<div class="a" style="left:281.02px;top:75.5px;width:35.93px;height:29.5px;background:#8d6123;border-radius:0px;"></div>
<svg style="left:291.32px;top:83.8px" width="13" height="11.5" viewBox="0 0 13 11.5"><rect x="0.55" y="0.55" width="11.9" height="10.4" rx="1.6" fill="none" stroke="#f6a933" stroke-width="1.1"/><circle cx="3.2" cy="3.3" r="0.75" fill="#f6a933"/><path d="M5.8 3.4 H9.8" stroke="#f6a933" stroke-width="0.9"/><path d="M3 5.4 V7.3 M5.25 5.4 V7.3 M7.5 5.4 V7.3 M9.75 5.4 V7.3" stroke="#f6a933" stroke-width="0.8"/><path d="M2.6 8.7 H10.4" stroke="#f6a933" stroke-width="0.8" stroke-dasharray="0.8 1.45"/></svg>
<div class="t" style="left:307.62px;top:89.3px;font-size:6.9px;color:#f6a933;font-weight:bold;">B</div>
<svg style="left:316.34999999999997px;top:75.5px" width="1" height="29.5" viewBox="0 0 1 29.5"><path d="M0.5 0 V29.5" stroke="#cfc1a2" stroke-width="1" stroke-dasharray="2.2 0.6"/></svg>
<svg style="left:327.25px;top:83.8px" width="13" height="11.5" viewBox="0 0 13 11.5"><rect x="0.55" y="0.55" width="11.9" height="10.4" rx="1.6" fill="none" stroke="#b57b22" stroke-width="1.1"/><circle cx="3.2" cy="3.3" r="0.75" fill="#b57b22"/><path d="M5.8 3.4 H9.8" stroke="#b57b22" stroke-width="0.9"/><path d="M3 5.4 V7.3 M5.25 5.4 V7.3 M7.5 5.4 V7.3 M9.75 5.4 V7.3" stroke="#b57b22" stroke-width="0.8"/><path d="M2.6 8.7 H10.4" stroke="#b57b22" stroke-width="0.8" stroke-dasharray="0.8 1.45"/></svg>
<div class="t" style="left:343.55px;top:89.3px;font-size:6.9px;color:#b57b22;font-weight:bold;">B</div>
<svg style="left:352.28px;top:75.5px" width="1" height="29.5" viewBox="0 0 1 29.5"><path d="M0.5 0 V29.5" stroke="#cfc1a2" stroke-width="1" stroke-dasharray="2.2 0.6"/></svg>
<svg style="left:363.18px;top:83.8px" width="13" height="11.5" viewBox="0 0 13 11.5"><rect x="0.55" y="0.55" width="11.9" height="10.4" rx="1.6" fill="none" stroke="#b57b22" stroke-width="1.1"/><circle cx="3.2" cy="3.3" r="0.75" fill="#b57b22"/><path d="M5.8 3.4 H9.8" stroke="#b57b22" stroke-width="0.9"/><path d="M3 5.4 V7.3 M5.25 5.4 V7.3 M7.5 5.4 V7.3 M9.75 5.4 V7.3" stroke="#b57b22" stroke-width="0.8"/><path d="M2.6 8.7 H10.4" stroke="#b57b22" stroke-width="0.8" stroke-dasharray="0.8 1.45"/></svg>
<div class="t" style="left:379.48px;top:89.3px;font-size:6.9px;color:#b57b22;font-weight:bold;">B</div>
<svg style="left:388.21px;top:75.5px" width="1" height="29.5" viewBox="0 0 1 29.5"><path d="M0.5 0 V29.5" stroke="#cfc1a2" stroke-width="1" stroke-dasharray="2.2 0.6"/></svg>
<svg style="left:399.11px;top:83.8px" width="13" height="11.5" viewBox="0 0 13 11.5"><rect x="0.55" y="0.55" width="11.9" height="10.4" rx="1.6" fill="none" stroke="#b57b22" stroke-width="1.1"/><circle cx="3.2" cy="3.3" r="0.75" fill="#b57b22"/><path d="M5.8 3.4 H9.8" stroke="#b57b22" stroke-width="0.9"/><path d="M3 5.4 V7.3 M5.25 5.4 V7.3 M7.5 5.4 V7.3 M9.75 5.4 V7.3" stroke="#b57b22" stroke-width="0.8"/><path d="M2.6 8.7 H10.4" stroke="#b57b22" stroke-width="0.8" stroke-dasharray="0.8 1.45"/></svg>
<div class="t" style="left:415.41px;top:89.3px;font-size:6.9px;color:#b57b22;font-weight:bold;">B</div>
<div class="t" style="left:283.21999999999997px;top:71.2px;font-size:4.75px;color:#e9dfcc;font-weight:bold;">Drum Machine</div>
<svg style="left:141.8px;top:109px" width="653.5" height="32" viewBox="0 0 653.5 32"><rect x="0.5" y="0.5" width="652.5" height="31" rx="3.5" fill="none" stroke="#48484c" stroke-width="0.9" stroke-dasharray="1.2 1.6"/></svg>
<svg style="left:462px;top:113px" width="14" height="14" viewBox="0 0 14 14"><path d="M3.2 1.1 Q3.45 3.25 5.6 3.5 Q3.45 3.75 3.2 5.9 Q2.95 3.75 0.8 3.5 Q2.95 3.25 3.2 1.1 Z" fill="#eee" stroke="#eee" stroke-width="0.5" stroke-linejoin="round"/><path d="M6.5 11.1 V4.9 L11.6 4 V10.5" fill="none" stroke="#eee" stroke-width="1.05" stroke-linejoin="round"/><circle cx="5.3" cy="11.5" r="1.25" fill="none" stroke="#eee" stroke-width="1"/><circle cx="10.3" cy="10.6" r="1.25" fill="none" stroke="#eee" stroke-width="1"/></svg>
<div class="t" style="left:400px;top:127.6px;font-size:8px;color:#e0e0e0;font-weight:normal;">Drop a loop or an audio/MIDI/video file</div>
<div class="a" style="left:131px;top:245px;width:139px;height:4px;background:#4b4b4e;border-radius:2px;"></div>
<div class="a" style="left:136.2px;top:64px;width:1.5px;height:187px;background:#5f6065;border-radius:0px;"></div>
<div class="a" style="left:130px;top:105px;width:0.9px;height:146px;background:#0d0d10;border-radius:0px;"></div>
<div class="a" style="left:134.6px;top:64.5px;width:4px;height:4px;background:#eeeeee;border-radius:2px;"></div>
<div class="a" style="left:0.6px;top:0px;width:0.9px;height:441px;background:#0e0e10;border-radius:0px;"></div>
<div class="a" style="left:0px;top:251px;width:800px;height:190px;background:#101215;border-radius:0px;"></div>
<div class="a" style="left:0.6px;top:251px;width:0.9px;height:190px;background:#0b0b0d;border-radius:0px;"></div>
<div class="a" style="left:5.5px;top:255px;width:15px;height:15px;background:#20232a;border-radius:7.5px;"></div>
<svg style="left:10px;top:259.5px" width="6" height="6" viewBox="0 0 6 6"><path d="M0.5 0.5 L5.5 5.5 M5.5 0.5 L0.5 5.5" stroke="#eee" stroke-width="1.1"/></svg>
<svg style="left:25.6px;top:258px" width="8.2" height="7.8" viewBox="0 0 8.2 7.8"><rect x="0.45" y="0.45" width="7.3" height="6.9" rx="1.1" fill="#8a5a1c" stroke="#e39430" stroke-width="0.9"/><path d="M2 2.2 H3 M4.2 2.2 H6.2" stroke="#f0a040" stroke-width="0.7"/><path d="M2 4.8 Q4.1 6.2 6.2 4.8" fill="none" stroke="#f0a040" stroke-width="0.7"/></svg>
<div class="t" style="left:39.5px;top:259.6px;font-size:6.6px;color:#eaeaea;font-weight:bold;">Drum Machine</div>
<div class="a" style="left:0px;top:272.5px;width:800px;height:0.8px;background:#17181c;border-radius:0px;"></div>
<svg style="left:504.4px;top:258.8px" width="6" height="9" viewBox="0 0 6 9"><path d="M0.5 0.5 V6.6 L2 5.2 L3.1 7.6 L4.1 7.1 L3 4.8 H5 Z" fill="#1a1a1a" stroke="#e0e0e0" stroke-width="0.7" stroke-linejoin="round"/></svg>
<div class="a" style="left:760.5px;top:254.2px;width:15.5px;height:15.5px;background:#f4f4f4;border-radius:7.75px;"></div>
<svg style="left:765.2px;top:259.3px" width="7" height="5.5" viewBox="0 0 7 5.5"><rect x="0.5" y="0.5" width="6" height="4.6" rx="1" fill="none" stroke="#333" stroke-width="0.95"/><rect x="2" y="1.7" width="1.2" height="1.5" fill="#333"/><rect x="3.9" y="1.7" width="1.2" height="1.5" fill="#333"/></svg>
<div class="a" style="left:780.4px;top:254.6px;width:14.8px;height:14.8px;background:#1f2228;border-radius:7.4px;"></div>
<svg style="left:786.8px;top:258.8px" width="2" height="7" viewBox="0 0 2 7"><circle cx="1" cy="0.8" r="0.8" fill="#e6e6e6"/><circle cx="1" cy="3.5" r="0.8" fill="#e6e6e6"/><circle cx="1" cy="6.2" r="0.8" fill="#e6e6e6"/></svg>
<div class="a" style="left:5.5px;top:280px;width:168px;height:15.5px;background:#1a1c20;border-radius:7.75px;"></div>
<div class="t" style="left:16px;top:285.4px;font-size:6px;color:#ececec;font-weight:normal;">Drum Pads</div>
<div class="a" style="left:56px;top:282px;width:89px;height:11.5px;background:#2c3139;border-radius:5.75px;"></div>
<div class="t" style="left:95.5px;top:285.4px;font-size:6px;color:#ececec;font-weight:normal;">808</div>
<div class="a" style="left:149.4px;top:282px;width:21.2px;height:11.5px;background:#24272e;border-radius:5.75px;"></div>
<svg style="left:151.8px;top:284.8px" width="4" height="6" viewBox="0 0 4 6"><path d="M3.2 0.4 L0.9 3 L3.2 5.6" fill="none" stroke="#ddd" stroke-width="1"/></svg>
<svg style="left:163.5px;top:285px" width="4" height="6" viewBox="0 0 4 6"><path d="M0.8 0.4 L3.2 3 L0.8 5.6" fill="none" stroke="#ddd" stroke-width="0.9"/></svg>
<div class="a" style="left:178px;top:280.5px;width:60px;height:15px;background:#1a1b1f;border-radius:7.5px;"></div>
<div class="t" style="left:182.5px;top:285.5px;font-size:6px;color:#ececec;font-weight:normal;">Edit</div>
<div class="a" style="left:198px;top:283px;width:19.5px;height:10.5px;background:#f4f4f4;border-radius:5.25px;"></div>
<svg style="left:204px;top:285px" width="7" height="6" viewBox="0 0 7 6"><path d="M0.5 0.5 L1.5 3.8 L2.2 2.6 L3.6 4 L4.1 3.5 L2.7 2.1 L3.9 1.4 Z" fill="#111"/><path d="M4.5 3 H6.5 M4.5 4.5 H6.5 M5.5 2 V5.5" stroke="#111" stroke-width="0.5"/></svg>
<div class="t" style="left:224px;top:285.5px;font-size:6px;color:#ececec;font-weight:normal;">V</div>
<div class="a" style="left:326.5px;top:280.7px;width:45px;height:14.5px;background:#1a1b1f;border-radius:3.5px;"></div>
<div class="t" style="left:332.5px;top:285.3px;font-size:7px;color:#e6e6e6;font-weight:normal;">1 bar</div>
<svg style="left:358.5px;top:286px" width="6" height="4" viewBox="0 0 6 4"><path d="M0.5 0.5 L3 3 L5.5 0.5" fill="none" stroke="#bbb" stroke-width="0.9"/></svg>
<div class="a" style="left:377px;top:280.7px;width:112.5px;height:14.5px;background:#1a1b1f;border-radius:7.25px;"></div>
<div class="t" style="left:385px;top:285.6px;font-size:5.6px;color:#e4e4e4;font-weight:bold;">Swing</div>
<div class="a" style="left:408px;top:287.6px;width:49px;height:0;border-top:0.8px dotted #303136"></div>
<div class="a" style="left:403.2px;top:285.6px;width:4px;height:4px;background:#f2f2f2;border-radius:2px;"></div>
<div class="t" style="left:465px;top:285.6px;font-size:5.8px;color:#e4e4e4;font-weight:bold;">0%</div>
<div class="a" style="left:580px;top:280px;width:16px;height:16px;background:#f4f4f4;border-radius:8px;"></div>
<svg style="left:585.5px;top:284.5px" width="6" height="7" viewBox="0 0 6 7"><path d="M0.5 0.3 L5.6 3.5 L0.5 6.7 Z" fill="#111"/></svg>
<div class="t" style="left:601px;top:285.8px;font-size:5.8px;color:#e4e4e4;font-weight:bold;">Patterns</div>
<div class="a" style="left:628.0px;top:280px;width:15px;height:15.5px;background:#f4f4f4;border-radius:2.5px;"></div>
<div class="t" style="left:633.3px;top:285.9px;font-size:5.8px;color:#111;font-weight:bold;">A</div>
<div class="a" style="left:644.9px;top:280px;width:15px;height:15.5px;background:#1f222a;border-radius:2.5px;"></div>
<div class="t" style="left:650.1999999999999px;top:285.9px;font-size:5.8px;color:#cfcfd2;font-weight:bold;">B</div>
<div class="a" style="left:661.8px;top:280px;width:15px;height:15.5px;background:#1f222a;border-radius:2.5px;"></div>
<div class="t" style="left:667.0999999999999px;top:285.9px;font-size:5.8px;color:#cfcfd2;font-weight:bold;">C</div>
<div class="a" style="left:678.7px;top:280px;width:15px;height:15.5px;background:#1f222a;border-radius:2.5px;"></div>
<div class="t" style="left:684.0px;top:285.9px;font-size:5.8px;color:#cfcfd2;font-weight:bold;">D</div>
<div class="a" style="left:695.6px;top:280px;width:15px;height:15.5px;background:#1f222a;border-radius:2.5px;"></div>
<div class="t" style="left:700.9px;top:285.9px;font-size:5.8px;color:#cfcfd2;font-weight:bold;">E</div>
<div class="a" style="left:712.5px;top:280px;width:15px;height:15.5px;background:#1f222a;border-radius:2.5px;"></div>
<div class="t" style="left:717.8px;top:285.9px;font-size:5.8px;color:#cfcfd2;font-weight:bold;">F</div>
<div class="a" style="left:729.4px;top:280px;width:15px;height:15.5px;background:#1f222a;border-radius:2.5px;"></div>
<div class="t" style="left:734.6999999999999px;top:285.9px;font-size:5.8px;color:#cfcfd2;font-weight:bold;">G</div>
<div class="a" style="left:746.3px;top:280px;width:15px;height:15.5px;background:#1f222a;border-radius:2.5px;"></div>
<div class="t" style="left:751.5999999999999px;top:285.9px;font-size:5.8px;color:#cfcfd2;font-weight:bold;">H</div>
<div class="a" style="left:764.5px;top:280px;width:31px;height:16px;background:#f4f4f4;border-radius:8px;"></div>
<div class="t" style="left:770.5px;top:285.2px;font-size:6.6px;color:#111;font-weight:bold;">Add A</div>
<div class="t" style="left:40.3px;top:307px;font-size:5.2px;color:#c2882e;font-weight:bold;">1.1</div>
<div class="t" style="left:229px;top:307px;font-size:5.2px;color:#6e6e72;font-weight:normal;">1.2</div>
<div class="t" style="left:418px;top:307px;font-size:5.2px;color:#6e6e72;font-weight:normal;">1.3</div>
<div class="t" style="left:607px;top:307px;font-size:5.2px;color:#6e6e72;font-weight:normal;">1.4</div>
<div class="a" style="left:8px;top:317px;width:32px;height:97.0px;background:#17181b;border-radius:0px;"></div>
<div class="t" style="left:24.5px;top:320.4px;font-size:6.6px;color:#747478;font-weight:normal;">L</div>
<svg style="left:37px;top:325.925px" width="2.5" height="2.5" viewBox="0 0 2.5 2.5"><path d="M2.5 0 V2.5 H0 Z" fill="#aaa"/></svg>
<div class="t" style="left:24.5px;top:332.525px;font-size:6.6px;color:#747478;font-weight:normal;">K</div>
<div class="a" style="left:8px;top:329.125px;width:32px;height:0.7px;background:#0f1013;border-radius:0px;"></div>
<svg style="left:37px;top:338.05px" width="2.5" height="2.5" viewBox="0 0 2.5 2.5"><path d="M2.5 0 V2.5 H0 Z" fill="#aaa"/></svg>
<div class="t" style="left:24.5px;top:344.65px;font-size:6.6px;color:#747478;font-weight:normal;">J</div>
<div class="a" style="left:8px;top:341.25px;width:32px;height:0.7px;background:#0f1013;border-radius:0px;"></div>
<svg style="left:37px;top:350.175px" width="2.5" height="2.5" viewBox="0 0 2.5 2.5"><path d="M2.5 0 V2.5 H0 Z" fill="#aaa"/></svg>
<div class="t" style="left:24.5px;top:356.775px;font-size:6.6px;color:#747478;font-weight:normal;">E</div>
<div class="a" style="left:8px;top:353.375px;width:32px;height:0.7px;background:#0f1013;border-radius:0px;"></div>
<svg style="left:37px;top:362.3px" width="2.5" height="2.5" viewBox="0 0 2.5 2.5"><path d="M2.5 0 V2.5 H0 Z" fill="#aaa"/></svg>
<div class="t" style="left:24.5px;top:368.9px;font-size:6.6px;color:#747478;font-weight:normal;">I</div>
<div class="a" style="left:8px;top:365.5px;width:32px;height:0.7px;background:#0f1013;border-radius:0px;"></div>
<svg style="left:37px;top:374.425px" width="2.5" height="2.5" viewBox="0 0 2.5 2.5"><path d="M2.5 0 V2.5 H0 Z" fill="#aaa"/></svg>
<div class="t" style="left:24.5px;top:381.025px;font-size:6.6px;color:#747478;font-weight:normal;">F</div>
<div class="a" style="left:8px;top:377.625px;width:32px;height:0.7px;background:#0f1013;border-radius:0px;"></div>
<svg style="left:37px;top:386.55px" width="2.5" height="2.5" viewBox="0 0 2.5 2.5"><path d="M2.5 0 V2.5 H0 Z" fill="#aaa"/></svg>
<div class="t" style="left:24.5px;top:393.15px;font-size:6.6px;color:#747478;font-weight:normal;">O</div>
<div class="a" style="left:8px;top:389.75px;width:32px;height:0.7px;background:#0f1013;border-radius:0px;"></div>
<svg style="left:37px;top:398.675px" width="2.5" height="2.5" viewBox="0 0 2.5 2.5"><path d="M2.5 0 V2.5 H0 Z" fill="#aaa"/></svg>
<div class="t" style="left:24.5px;top:405.275px;font-size:6.6px;color:#747478;font-weight:normal;">A</div>
<div class="a" style="left:8px;top:401.875px;width:32px;height:0.7px;background:#0f1013;border-radius:0px;"></div>
<svg style="left:37px;top:410.8px" width="2.5" height="2.5" viewBox="0 0 2.5 2.5"><path d="M2.5 0 V2.5 H0 Z" fill="#aaa"/></svg>
<svg style="left:12.3px;top:320.3px" width="6" height="6" viewBox="0 0 6 6"><g transform="translate(0.4 0.4) scale(0.85)"><path d="M0.5 5.5 L3 3 L5.5 0.5 M1 5 L1.8 3.4 L3.6 1.8 L5.5 0.5 L4.2 2.5 L2.6 4.2 Z" fill="#a8a8ac" stroke="#a8a8ac" stroke-width="0.6"/></g></svg>
<svg style="left:12.3px;top:332.425px" width="6" height="6" viewBox="0 0 6 6"><g transform="translate(0.4 0.4) scale(0.85)"><ellipse cx="3" cy="3" rx="2.8" ry="1.9" fill="none" stroke="#a8a8ac" stroke-width="0.9"/><circle cx="3" cy="3" r="0.9" fill="#a8a8ac"/></g></svg>
<svg style="left:12.3px;top:344.55px" width="6" height="6" viewBox="0 0 6 6"><g transform="translate(0.4 0.4) scale(0.85)"><path d="M0.3 3 H5.7 M3 0.5 V5.5" stroke="#a8a8ac" stroke-width="1"/><ellipse cx="3" cy="3" rx="1.6" ry="1" fill="#a8a8ac"/></g></svg>
<svg style="left:12.3px;top:356.675px" width="6" height="6" viewBox="0 0 6 6"><g transform="translate(0.4 0.4) scale(0.85)"><rect x="0.7" y="1.6" width="4.6" height="3.2" rx="1.3" fill="none" stroke="#a8a8ac" stroke-width="0.9"/><path d="M0.7 3 H5.3" stroke="#a8a8ac" stroke-width="0.7"/></g></svg>
<svg style="left:12.3px;top:368.8px" width="6" height="6" viewBox="0 0 6 6"><g transform="translate(0.4 0.4) scale(0.85)"><path d="M0.7 1.5 V4.6 A2.3 1 0 0 0 5.3 4.6 V1.5" fill="none" stroke="#a8a8ac" stroke-width="0.9"/><ellipse cx="3" cy="1.5" rx="2.3" ry="0.9" fill="none" stroke="#a8a8ac" stroke-width="0.8"/></g></svg>
<svg style="left:12.3px;top:380.925px" width="6" height="6" viewBox="0 0 6 6"><g transform="translate(0.4 0.4) scale(0.85)"><ellipse cx="3" cy="3" rx="2.8" ry="2" fill="none" stroke="#a8a8ac" stroke-width="0.9"/><ellipse cx="3" cy="2.4" rx="2.2" ry="1" fill="#a8a8ac"/></g></svg>
<svg style="left:12.3px;top:393.05px" width="6" height="6" viewBox="0 0 6 6"><g transform="translate(0.4 0.4) scale(0.85)"><path d="M0.6 1.6 V4.8 A2.4 1 0 0 0 5.4 4.8 V1.6" fill="none" stroke="#a8a8ac" stroke-width="0.9"/><ellipse cx="3" cy="1.6" rx="2.4" ry="1" fill="none" stroke="#a8a8ac" stroke-width="0.8"/></g></svg>
<svg style="left:12.3px;top:405.175px" width="6" height="6" viewBox="0 0 6 6"><g transform="translate(0.4 0.4) scale(0.85)"><circle cx="3" cy="3" r="2.6" fill="none" stroke="#a8a8ac" stroke-width="0.9"/><circle cx="3" cy="2.3" r="1" fill="#a8a8ac"/><path d="M1.4 4.6 L3 3 L4.6 4.6" stroke="#a8a8ac" stroke-width="0.7" fill="none"/></g></svg>
<div class="a" style="left:40px;top:317px;width:756px;height:97.0px;background:#0d0e11;border-radius:0px;"></div>
<div class="a" style="left:40.5px;top:317.5px;width:46.25px;height:11.12px;background:#1b1c20;border-radius:0px;"></div>
<div class="a" style="left:87.75px;top:317.5px;width:46.25px;height:11.12px;background:#1b1c20;border-radius:0px;"></div>
<div class="a" style="left:135.0px;top:317.5px;width:46.25px;height:11.12px;background:#1b1c20;border-radius:0px;"></div>
<div class="a" style="left:182.25px;top:317.5px;width:46.25px;height:11.12px;background:#1b1c20;border-radius:0px;"></div>
<div class="a" style="left:229.5px;top:317.5px;width:46.25px;height:11.12px;background:#131418;border-radius:0px;"></div>
<div class="a" style="left:276.75px;top:317.5px;width:46.25px;height:11.12px;background:#131418;border-radius:0px;"></div>
<div class="a" style="left:324.0px;top:317.5px;width:46.25px;height:11.12px;background:#131418;border-radius:0px;"></div>
<div class="a" style="left:371.25px;top:317.5px;width:46.25px;height:11.12px;background:#131418;border-radius:0px;"></div>
<div class="a" style="left:418.5px;top:317.5px;width:46.25px;height:11.12px;background:#1b1c20;border-radius:0px;"></div>
<div class="a" style="left:465.75px;top:317.5px;width:46.25px;height:11.12px;background:#1b1c20;border-radius:0px;"></div>
<div class="a" style="left:513.0px;top:317.5px;width:46.25px;height:11.12px;background:#1b1c20;border-radius:0px;"></div>
<div class="a" style="left:560.25px;top:317.5px;width:46.25px;height:11.12px;background:#1b1c20;border-radius:0px;"></div>
<div class="a" style="left:607.5px;top:317.5px;width:46.25px;height:11.12px;background:#131418;border-radius:0px;"></div>
<div class="a" style="left:654.75px;top:317.5px;width:46.25px;height:11.12px;background:#131418;border-radius:0px;"></div>
<div class="a" style="left:702.0px;top:317.5px;width:46.25px;height:11.12px;background:#131418;border-radius:0px;"></div>
<div class="a" style="left:749.25px;top:317.5px;width:46.25px;height:11.12px;background:#131418;border-radius:0px;"></div>
<div class="a" style="left:40.5px;top:329.62px;width:46.25px;height:11.12px;background:#1b1c20;border-radius:0px;"></div>
<div class="a" style="left:87.75px;top:329.62px;width:46.25px;height:11.12px;background:#1b1c20;border-radius:0px;"></div>
<div class="a" style="left:135.0px;top:329.62px;width:46.25px;height:11.12px;background:#1b1c20;border-radius:0px;"></div>
<div class="a" style="left:182.25px;top:329.62px;width:46.25px;height:11.12px;background:#1b1c20;border-radius:0px;"></div>
<div class="a" style="left:229.5px;top:329.62px;width:46.25px;height:11.12px;background:#131418;border-radius:0px;"></div>
<div class="a" style="left:276.75px;top:329.62px;width:46.25px;height:11.12px;background:#131418;border-radius:0px;"></div>
<div class="a" style="left:324.0px;top:329.62px;width:46.25px;height:11.12px;background:#131418;border-radius:0px;"></div>
<div class="a" style="left:371.25px;top:329.62px;width:46.25px;height:11.12px;background:#131418;border-radius:0px;"></div>
<div class="a" style="left:418.5px;top:329.62px;width:46.25px;height:11.12px;background:#1b1c20;border-radius:0px;"></div>
<div class="a" style="left:465.75px;top:329.62px;width:46.25px;height:11.12px;background:#1b1c20;border-radius:0px;"></div>
<div class="a" style="left:513.0px;top:329.62px;width:46.25px;height:11.12px;background:#1b1c20;border-radius:0px;"></div>
<div class="a" style="left:560.25px;top:329.62px;width:46.25px;height:11.12px;background:#1b1c20;border-radius:0px;"></div>
<div class="a" style="left:607.5px;top:329.62px;width:46.25px;height:11.12px;background:#131418;border-radius:0px;"></div>
<div class="a" style="left:654.75px;top:329.62px;width:46.25px;height:11.12px;background:#131418;border-radius:0px;"></div>
<div class="a" style="left:702.0px;top:329.62px;width:46.25px;height:11.12px;background:#131418;border-radius:0px;"></div>
<div class="a" style="left:749.25px;top:329.62px;width:46.25px;height:11.12px;background:#131418;border-radius:0px;"></div>
<div class="a" style="left:40.5px;top:341.75px;width:46.25px;height:11.12px;background:#1b1c20;border-radius:0px;"></div>
<div class="a" style="left:87.75px;top:341.75px;width:46.25px;height:11.12px;background:#1b1c20;border-radius:0px;"></div>
<div class="a" style="left:135.0px;top:341.75px;width:46.25px;height:11.12px;background:#1b1c20;border-radius:0px;"></div>
<div class="a" style="left:182.25px;top:341.75px;width:46.25px;height:11.12px;background:#1b1c20;border-radius:0px;"></div>
<div class="a" style="left:229.5px;top:341.75px;width:46.25px;height:11.12px;background:#131418;border-radius:0px;"></div>
<div class="a" style="left:276.75px;top:341.75px;width:46.25px;height:11.12px;background:#131418;border-radius:0px;"></div>
<div class="a" style="left:324.0px;top:341.75px;width:46.25px;height:11.12px;background:#131418;border-radius:0px;"></div>
<div class="a" style="left:371.25px;top:341.75px;width:46.25px;height:11.12px;background:#131418;border-radius:0px;"></div>
<div class="a" style="left:418.5px;top:341.75px;width:46.25px;height:11.12px;background:#1b1c20;border-radius:0px;"></div>
<div class="a" style="left:465.75px;top:341.75px;width:46.25px;height:11.12px;background:#1b1c20;border-radius:0px;"></div>
<div class="a" style="left:513.0px;top:341.75px;width:46.25px;height:11.12px;background:#1b1c20;border-radius:0px;"></div>
<div class="a" style="left:560.25px;top:341.75px;width:46.25px;height:11.12px;background:#1b1c20;border-radius:0px;"></div>
<div class="a" style="left:607.5px;top:341.75px;width:46.25px;height:11.12px;background:#131418;border-radius:0px;"></div>
<div class="a" style="left:654.75px;top:341.75px;width:46.25px;height:11.12px;background:#131418;border-radius:0px;"></div>
<div class="a" style="left:702.0px;top:341.75px;width:46.25px;height:11.12px;background:#131418;border-radius:0px;"></div>
<div class="a" style="left:749.25px;top:341.75px;width:46.25px;height:11.12px;background:#131418;border-radius:0px;"></div>
<div class="a" style="left:40.5px;top:353.88px;width:46.25px;height:11.12px;background:#1b1c20;border-radius:0px;"></div>
<div class="a" style="left:87.75px;top:353.88px;width:46.25px;height:11.12px;background:#1b1c20;border-radius:0px;"></div>
<div class="a" style="left:135.0px;top:353.88px;width:46.25px;height:11.12px;background:#1b1c20;border-radius:0px;"></div>
<div class="a" style="left:182.25px;top:353.88px;width:46.25px;height:11.12px;background:#1b1c20;border-radius:0px;"></div>
<div class="a" style="left:229.5px;top:353.88px;width:46.25px;height:11.12px;background:#131418;border-radius:0px;"></div>
<div class="a" style="left:276.75px;top:353.88px;width:46.25px;height:11.12px;background:#131418;border-radius:0px;"></div>
<div class="a" style="left:324.0px;top:353.88px;width:46.25px;height:11.12px;background:#131418;border-radius:0px;"></div>
<div class="a" style="left:371.25px;top:353.88px;width:46.25px;height:11.12px;background:#131418;border-radius:0px;"></div>
<div class="a" style="left:418.5px;top:353.88px;width:46.25px;height:11.12px;background:#1b1c20;border-radius:0px;"></div>
<div class="a" style="left:465.75px;top:353.88px;width:46.25px;height:11.12px;background:#1b1c20;border-radius:0px;"></div>
<div class="a" style="left:513.0px;top:353.88px;width:46.25px;height:11.12px;background:#1b1c20;border-radius:0px;"></div>
<div class="a" style="left:560.25px;top:353.88px;width:46.25px;height:11.12px;background:#1b1c20;border-radius:0px;"></div>
<div class="a" style="left:607.5px;top:353.88px;width:46.25px;height:11.12px;background:#131418;border-radius:0px;"></div>
<div class="a" style="left:654.75px;top:353.88px;width:46.25px;height:11.12px;background:#131418;border-radius:0px;"></div>
<div class="a" style="left:702.0px;top:353.88px;width:46.25px;height:11.12px;background:#131418;border-radius:0px;"></div>
<div class="a" style="left:749.25px;top:353.88px;width:46.25px;height:11.12px;background:#131418;border-radius:0px;"></div>
<div class="a" style="left:40.5px;top:366.0px;width:46.25px;height:11.12px;background:#1b1c20;border-radius:0px;"></div>
<div class="a" style="left:87.75px;top:366.0px;width:46.25px;height:11.12px;background:#1b1c20;border-radius:0px;"></div>
<div class="a" style="left:135.0px;top:366.0px;width:46.25px;height:11.12px;background:#1b1c20;border-radius:0px;"></div>
<div class="a" style="left:182.25px;top:366.0px;width:46.25px;height:11.12px;background:#1b1c20;border-radius:0px;"></div>
<div class="a" style="left:229.5px;top:366.0px;width:46.25px;height:11.12px;background:#131418;border-radius:0px;"></div>
<div class="a" style="left:276.75px;top:366.0px;width:46.25px;height:11.12px;background:#131418;border-radius:0px;"></div>
<div class="a" style="left:324.0px;top:366.0px;width:46.25px;height:11.12px;background:#131418;border-radius:0px;"></div>
<div class="a" style="left:371.25px;top:366.0px;width:46.25px;height:11.12px;background:#131418;border-radius:0px;"></div>
<div class="a" style="left:418.5px;top:366.0px;width:46.25px;height:11.12px;background:#1b1c20;border-radius:0px;"></div>
<div class="a" style="left:465.75px;top:366.0px;width:46.25px;height:11.12px;background:#1b1c20;border-radius:0px;"></div>
<div class="a" style="left:513.0px;top:366.0px;width:46.25px;height:11.12px;background:#1b1c20;border-radius:0px;"></div>
<div class="a" style="left:560.25px;top:366.0px;width:46.25px;height:11.12px;background:#1b1c20;border-radius:0px;"></div>
<div class="a" style="left:607.5px;top:366.0px;width:46.25px;height:11.12px;background:#131418;border-radius:0px;"></div>
<div class="a" style="left:654.75px;top:366.0px;width:46.25px;height:11.12px;background:#131418;border-radius:0px;"></div>
<div class="a" style="left:702.0px;top:366.0px;width:46.25px;height:11.12px;background:#131418;border-radius:0px;"></div>
<div class="a" style="left:749.25px;top:366.0px;width:46.25px;height:11.12px;background:#131418;border-radius:0px;"></div>
<div class="a" style="left:40.5px;top:378.12px;width:46.25px;height:11.12px;background:#1b1c20;border-radius:0px;"></div>
<div class="a" style="left:87.75px;top:378.12px;width:46.25px;height:11.12px;background:#1b1c20;border-radius:0px;"></div>
<div class="a" style="left:135.0px;top:378.12px;width:46.25px;height:11.12px;background:#1b1c20;border-radius:0px;"></div>
<div class="a" style="left:182.25px;top:378.12px;width:46.25px;height:11.12px;background:#1b1c20;border-radius:0px;"></div>
<div class="a" style="left:229.5px;top:378.12px;width:46.25px;height:11.12px;background:#131418;border-radius:0px;"></div>
<div class="a" style="left:276.75px;top:378.12px;width:46.25px;height:11.12px;background:#131418;border-radius:0px;"></div>
<div class="a" style="left:324.0px;top:378.12px;width:46.25px;height:11.12px;background:#131418;border-radius:0px;"></div>
<div class="a" style="left:371.25px;top:378.12px;width:46.25px;height:11.12px;background:#131418;border-radius:0px;"></div>
<div class="a" style="left:418.5px;top:378.12px;width:46.25px;height:11.12px;background:#1b1c20;border-radius:0px;"></div>
<div class="a" style="left:465.75px;top:378.12px;width:46.25px;height:11.12px;background:#1b1c20;border-radius:0px;"></div>
<div class="a" style="left:513.0px;top:378.12px;width:46.25px;height:11.12px;background:#1b1c20;border-radius:0px;"></div>
<div class="a" style="left:560.25px;top:378.12px;width:46.25px;height:11.12px;background:#1b1c20;border-radius:0px;"></div>
<div class="a" style="left:607.5px;top:378.12px;width:46.25px;height:11.12px;background:#131418;border-radius:0px;"></div>
<div class="a" style="left:654.75px;top:378.12px;width:46.25px;height:11.12px;background:#131418;border-radius:0px;"></div>
<div class="a" style="left:702.0px;top:378.12px;width:46.25px;height:11.12px;background:#131418;border-radius:0px;"></div>
<div class="a" style="left:749.25px;top:378.12px;width:46.25px;height:11.12px;background:#131418;border-radius:0px;"></div>
<div class="a" style="left:40.5px;top:390.25px;width:46.25px;height:11.12px;background:#1b1c20;border-radius:0px;"></div>
<div class="a" style="left:87.75px;top:390.25px;width:46.25px;height:11.12px;background:#1b1c20;border-radius:0px;"></div>
<div class="a" style="left:135.0px;top:390.25px;width:46.25px;height:11.12px;background:#1b1c20;border-radius:0px;"></div>
<div class="a" style="left:182.25px;top:390.25px;width:46.25px;height:11.12px;background:#1b1c20;border-radius:0px;"></div>
<div class="a" style="left:229.5px;top:390.25px;width:46.25px;height:11.12px;background:#131418;border-radius:0px;"></div>
<div class="a" style="left:276.75px;top:390.25px;width:46.25px;height:11.12px;background:#131418;border-radius:0px;"></div>
<div class="a" style="left:324.0px;top:390.25px;width:46.25px;height:11.12px;background:#131418;border-radius:0px;"></div>
<div class="a" style="left:371.25px;top:390.25px;width:46.25px;height:11.12px;background:#131418;border-radius:0px;"></div>
<div class="a" style="left:418.5px;top:390.25px;width:46.25px;height:11.12px;background:#1b1c20;border-radius:0px;"></div>
<div class="a" style="left:465.75px;top:390.25px;width:46.25px;height:11.12px;background:#1b1c20;border-radius:0px;"></div>
<div class="a" style="left:513.0px;top:390.25px;width:46.25px;height:11.12px;background:#1b1c20;border-radius:0px;"></div>
<div class="a" style="left:560.25px;top:390.25px;width:46.25px;height:11.12px;background:#1b1c20;border-radius:0px;"></div>
<div class="a" style="left:607.5px;top:390.25px;width:46.25px;height:11.12px;background:#131418;border-radius:0px;"></div>
<div class="a" style="left:654.75px;top:390.25px;width:46.25px;height:11.12px;background:#131418;border-radius:0px;"></div>
<div class="a" style="left:702.0px;top:390.25px;width:46.25px;height:11.12px;background:#131418;border-radius:0px;"></div>
<div class="a" style="left:749.25px;top:390.25px;width:46.25px;height:11.12px;background:#131418;border-radius:0px;"></div>
<div class="a" style="left:40.5px;top:402.38px;width:46.25px;height:11.12px;background:#1b1c20;border-radius:0px;"></div>
<div class="a" style="left:87.75px;top:402.38px;width:46.25px;height:11.12px;background:#1b1c20;border-radius:0px;"></div>
<div class="a" style="left:135.0px;top:402.38px;width:46.25px;height:11.12px;background:#1b1c20;border-radius:0px;"></div>
<div class="a" style="left:182.25px;top:402.38px;width:46.25px;height:11.12px;background:#1b1c20;border-radius:0px;"></div>
<div class="a" style="left:229.5px;top:402.38px;width:46.25px;height:11.12px;background:#131418;border-radius:0px;"></div>
<div class="a" style="left:276.75px;top:402.38px;width:46.25px;height:11.12px;background:#131418;border-radius:0px;"></div>
<div class="a" style="left:324.0px;top:402.38px;width:46.25px;height:11.12px;background:#131418;border-radius:0px;"></div>
<div class="a" style="left:371.25px;top:402.38px;width:46.25px;height:11.12px;background:#131418;border-radius:0px;"></div>
<div class="a" style="left:418.5px;top:402.38px;width:46.25px;height:11.12px;background:#1b1c20;border-radius:0px;"></div>
<div class="a" style="left:465.75px;top:402.38px;width:46.25px;height:11.12px;background:#1b1c20;border-radius:0px;"></div>
<div class="a" style="left:513.0px;top:402.38px;width:46.25px;height:11.12px;background:#1b1c20;border-radius:0px;"></div>
<div class="a" style="left:560.25px;top:402.38px;width:46.25px;height:11.12px;background:#1b1c20;border-radius:0px;"></div>
<div class="a" style="left:607.5px;top:402.38px;width:46.25px;height:11.12px;background:#131418;border-radius:0px;"></div>
<div class="a" style="left:654.75px;top:402.38px;width:46.25px;height:11.12px;background:#131418;border-radius:0px;"></div>
<div class="a" style="left:702.0px;top:402.38px;width:46.25px;height:11.12px;background:#131418;border-radius:0px;"></div>
<div class="a" style="left:749.25px;top:402.38px;width:46.25px;height:11.12px;background:#131418;border-radius:0px;"></div>
<svg style="left:87.55px;top:329.27px" width="46.65" height="11.62"><rect x="0" y="0" width="46.65" height="11.62" rx="1.8" fill="#aa741f"/><rect x="0.6" y="0.6" width="45.45" height="10.43" rx="1.2" fill="none" stroke="#cf9a52" stroke-width="0.6" stroke-dasharray="1 1.4"/></svg>
<svg style="left:40.30px;top:341.40px" width="46.65" height="11.62"><rect x="0" y="0" width="46.65" height="11.62" rx="1.8" fill="#aa741f"/><rect x="0.6" y="0.6" width="45.45" height="10.43" rx="1.2" fill="none" stroke="#cf9a52" stroke-width="0.6" stroke-dasharray="1 1.4"/></svg>
<svg style="left:134.80px;top:341.40px" width="46.65" height="11.62"><rect x="0" y="0" width="46.65" height="11.62" rx="1.8" fill="#aa741f"/><rect x="0.6" y="0.6" width="45.45" height="10.43" rx="1.2" fill="none" stroke="#cf9a52" stroke-width="0.6" stroke-dasharray="1 1.4"/></svg>
<svg style="left:229.30px;top:341.40px" width="46.65" height="11.62"><rect x="0" y="0" width="46.65" height="11.62" rx="1.8" fill="#aa741f"/><rect x="0.6" y="0.6" width="45.45" height="10.43" rx="1.2" fill="none" stroke="#cf9a52" stroke-width="0.6" stroke-dasharray="1 1.4"/></svg>
<svg style="left:323.80px;top:341.40px" width="46.65" height="11.62"><rect x="0" y="0" width="46.65" height="11.62" rx="1.8" fill="#aa741f"/><rect x="0.6" y="0.6" width="45.45" height="10.43" rx="1.2" fill="none" stroke="#cf9a52" stroke-width="0.6" stroke-dasharray="1 1.4"/></svg>
<svg style="left:418.30px;top:341.40px" width="46.65" height="11.62"><rect x="0" y="0" width="46.65" height="11.62" rx="1.8" fill="#aa741f"/><rect x="0.6" y="0.6" width="45.45" height="10.43" rx="1.2" fill="none" stroke="#cf9a52" stroke-width="0.6" stroke-dasharray="1 1.4"/></svg>
<svg style="left:512.80px;top:341.40px" width="46.65" height="11.62"><rect x="0" y="0" width="46.65" height="11.62" rx="1.8" fill="#aa741f"/><rect x="0.6" y="0.6" width="45.45" height="10.43" rx="1.2" fill="none" stroke="#cf9a52" stroke-width="0.6" stroke-dasharray="1 1.4"/></svg>
<svg style="left:607.30px;top:341.40px" width="46.65" height="11.62"><rect x="0" y="0" width="46.65" height="11.62" rx="1.8" fill="#aa741f"/><rect x="0.6" y="0.6" width="45.45" height="10.43" rx="1.2" fill="none" stroke="#cf9a52" stroke-width="0.6" stroke-dasharray="1 1.4"/></svg>
<svg style="left:701.80px;top:341.40px" width="46.65" height="11.62"><rect x="0" y="0" width="46.65" height="11.62" rx="1.8" fill="#aa741f"/><rect x="0.6" y="0.6" width="45.45" height="10.43" rx="1.2" fill="none" stroke="#cf9a52" stroke-width="0.6" stroke-dasharray="1 1.4"/></svg>
<svg style="left:229.30px;top:377.77px" width="46.65" height="11.62"><rect x="0" y="0" width="46.65" height="11.62" rx="1.8" fill="#aa741f"/><rect x="0.6" y="0.6" width="45.45" height="10.43" rx="1.2" fill="none" stroke="#cf9a52" stroke-width="0.6" stroke-dasharray="1 1.4"/></svg>
<svg style="left:607.30px;top:377.77px" width="46.65" height="11.62"><rect x="0" y="0" width="46.65" height="11.62" rx="1.8" fill="#aa741f"/><rect x="0.6" y="0.6" width="45.45" height="10.43" rx="1.2" fill="none" stroke="#cf9a52" stroke-width="0.6" stroke-dasharray="1 1.4"/></svg>
<svg style="left:40.30px;top:402.02px" width="46.65" height="11.62"><rect x="0" y="0" width="46.65" height="11.62" rx="1.8" fill="#aa741f"/><rect x="0.6" y="0.6" width="45.45" height="10.43" rx="1.2" fill="none" stroke="#cf9a52" stroke-width="0.6" stroke-dasharray="1 1.4"/></svg>
<svg style="left:371.05px;top:402.02px" width="46.65" height="11.62"><rect x="0" y="0" width="46.65" height="11.62" rx="1.8" fill="#aa741f"/><rect x="0.6" y="0.6" width="45.45" height="10.43" rx="1.2" fill="none" stroke="#cf9a52" stroke-width="0.6" stroke-dasharray="1 1.4"/></svg>
<svg style="left:418.30px;top:402.02px" width="46.65" height="11.62"><rect x="0" y="0" width="46.65" height="11.62" rx="1.8" fill="#aa741f"/><rect x="0.6" y="0.6" width="45.45" height="10.43" rx="1.2" fill="none" stroke="#cf9a52" stroke-width="0.6" stroke-dasharray="1 1.4"/></svg>
<svg style="left:512.80px;top:402.02px" width="46.65" height="11.62"><rect x="0" y="0" width="46.65" height="11.62" rx="1.8" fill="#aa741f"/><rect x="0.6" y="0.6" width="45.45" height="10.43" rx="1.2" fill="none" stroke="#cf9a52" stroke-width="0.6" stroke-dasharray="1 1.4"/></svg>
<svg style="left:701.80px;top:402.02px" width="46.65" height="11.62"><rect x="0" y="0" width="46.65" height="11.62" rx="1.8" fill="#aa741f"/><rect x="0.6" y="0.6" width="45.45" height="10.43" rx="1.2" fill="none" stroke="#cf9a52" stroke-width="0.6" stroke-dasharray="1 1.4"/></svg>
<div class="a" style="left:6.6px;top:421.8px;width:102px;height:15.2px;background:#16181b;border-radius:7.6px;"></div>
<div class="a" style="left:7px;top:423.8px;width:56.8px;height:11.6px;background:#f4f4f4;border-radius:5.8px;"></div>
<svg style="left:16.5px;top:426.5px" width="6" height="6" viewBox="0 0 6 6"><rect x="0.5" y="0.5" width="5" height="5" rx="0.6" fill="none" stroke="#444" stroke-width="0.8"/><path d="M0.5 2.3 H5.5" stroke="#444" stroke-width="0.6"/></svg>
<div class="t" style="left:27.2px;top:427px;font-size:5.9px;color:#2a2a2a;font-weight:normal;">Instrument</div>
<div class="t" style="left:71px;top:427px;font-size:6.2px;color:#e6e6e6;font-weight:normal;"><i>Fx</i></div>
<div class="t" style="left:82.5px;top:427px;font-size:5.9px;color:#e6e6e6;font-weight:normal;">Effects</div>
<div class="a" style="left:622px;top:422.5px;width:123px;height:13.8px;background:#16181b;border-radius:6.9px;"></div>
<div class="a" style="left:679.8px;top:425px;width:0.7px;height:9px;background:#34353a;border-radius:0px;"></div>
<svg style="left:631px;top:426.5px" width="5" height="6" viewBox="0 0 5 6"><path d="M0.5 5.5 L1 3.8 L3.8 0.8 L4.6 1.6 L1.8 4.6 Z" fill="#bbb"/></svg>
<div class="t" style="left:641px;top:427px;font-size:5.9px;color:#e6e6e6;font-weight:normal;">Lyrics/Notes</div>
<svg style="left:687.3px;top:425.8px" width="6" height="7" viewBox="0 0 6 7"><circle cx="3" cy="4.3" r="2.3" fill="none" stroke="#eee" stroke-width="0.9"/><path d="M1.8 0.6 L3 2" stroke="#eee" stroke-width="0.9"/><circle cx="3" cy="4.3" r="0.9" fill="#eee"/></svg>
<div class="t" style="left:693.8px;top:427px;font-size:5.7px;color:#e6e6e6;font-weight:normal;letter-spacing:-0.12px"><b>BandLab</b> Sounds</div>
<div class="a" style="left:750px;top:422.5px;width:44.5px;height:13.8px;background:#16181b;border-radius:6.9px;"></div>
<svg style="left:755.5px;top:426.8px" width="5" height="5" viewBox="0 0 5 5"><path d="M0.6 0.6 L4.4 4.4 M4.4 0.6 L0.6 4.4" stroke="#ddd" stroke-width="1"/><circle cx="0.9" cy="0.9" r="0.8" fill="#ddd"/><circle cx="4.1" cy="0.9" r="0.8" fill="#ddd"/><circle cx="0.9" cy="4.1" r="0.8" fill="#ddd"/><circle cx="4.1" cy="4.1" r="0.8" fill="#ddd"/></svg>
<div class="t" style="left:763.8px;top:427px;font-size:5.6px;color:#ececec;font-weight:bold;">Shortcuts</div>
</body></html>
